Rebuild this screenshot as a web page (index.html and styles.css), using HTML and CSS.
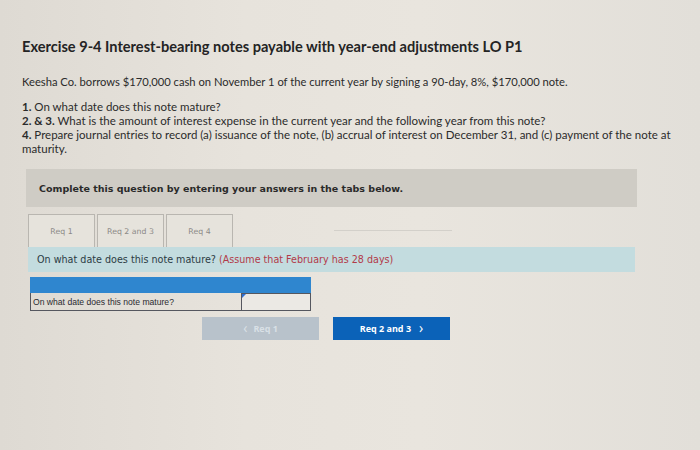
FILE: index.html
```html
<!DOCTYPE html>
<html>
<head>
<meta charset="utf-8">
<link rel="stylesheet" href="styles.css">
</head>
<body>
<div class="page">
  <h1 class="title">Exercise 9-4 Interest-bearing notes payable with year-end adjustments LO P1</h1>
  <p class="intro">Keesha Co. borrows $170,000 cash on November 1 of the current year by signing a 90-day, 8%, $170,000 note.</p>
  <ol class="reqs">
    <li><b>1.</b> On what date does this note mature?</li>
    <li><b>2. &amp; 3.</b> What is the amount of interest expense in the current year and the following year from this note?</li>
    <li><b>4.</b> Prepare journal entries to record (a) issuance of the note, (b) accrual of interest on December 31, and (c) payment of the note at maturity.</li>
  </ol>
  <div class="complete">Complete this question by entering your answers in the tabs below.</div>
  <div class="tabs">
    <div class="tab">Req 1</div>
    <div class="tab">Req 2 and 3</div>
    <div class="tab">Req 4</div>
    <div class="tabline"></div>
  </div>
  <div class="instr">On what date does this note mature? <span class="red">(Assume that February has 28 days)</span></div>
  <div class="answer">
    <div class="ahead"></div>
    <div class="arow">
      <div class="alabel">On what date does this note mature?</div>
      <div class="ainput"><span class="corner"></span></div>
    </div>
  </div>
  <div class="navs">
    <div class="btn prev"><span class="chev">&lsaquo;</span> Req 1</div>
    <div class="btn next">Req 2 and 3 <span class="chev">&rsaquo;</span></div>
  </div>
</div>
</body>
</html>
```
FILE: styles.css
```css
html, body {
  margin: 0;
  padding: 0;
}
body {
  width: 700px;
  height: 450px;
  overflow: hidden;
  background: linear-gradient(90deg, #dedad3 0%, #e7e3dc 35%, #e9e5de 60%, #e2dfd9 100%);
  font-family: Lato, "Open Sans", sans-serif;
  color: #2b2b2b;
}
.page {
  padding: 38px 0 0 22px;
}
.title {
  margin: 0;
  font-size: 14.6px;
  font-weight: 700;
  color: #242424;
  line-height: 18px;
}
.intro {
  margin: 19px 0 0 0;
  font-size: 11.2px;
  line-height: 14px;
}
.reqs {
  list-style: none;
  margin: 11px 0 0 0;
  padding: 0;
  font-size: 11.5px;
  line-height: 14px;
  width: 665px;
}
.reqs b {
  font-weight: 700;
}
.complete {
  margin: 13px 0 0 4px;
  width: 598px;
  height: 38px;
  background: #cfccc5;
  padding-left: 13px;
  display: flex;
  align-items: center;
  font-family: "DejaVu Sans", Verdana, sans-serif;
  font-weight: 700;
  font-size: 9.5px;
  color: #2a2a2a;
}
.tabs {
  display: flex;
  margin: 7px 0 0 6px;
  gap: 2px;
  align-items: stretch;
}
.tab {
  width: 65px;
  height: 32px;
  border: 1px solid #b9b6b0;
  border-bottom: none;
  display: flex;
  align-items: center;
  justify-content: center;
  font-family: "DejaVu Sans", Verdana, sans-serif;
  font-size: 7.8px;
  color: #8c8a87;
  background: #e6e3dc;
}
.tabline {
  align-self: center;
  margin-left: 99px;
  width: 118px;
  height: 1px;
  background: #d3d0ca;
}
.instr {
  margin-left: 6px;
  width: 598px;
  height: 25px;
  background: #c3dcdf;
  padding-left: 9px;
  display: flex;
  align-items: center;
  font-family: "DejaVu Sans", Verdana, sans-serif;
  font-size: 9.6px;
  color: #2c3b44;
}
.red {
  color: #b23a48;
  margin-left: 3px;
}
.answer {
  margin: 5px 0 0 8px;
  width: 281px;
}
.ahead {
  height: 16px;
  background: #2f86cf;
}
.arow {
  display: flex;
  height: 17px;
  border: 1px solid #55575f;
  border-top: none;
}
.alabel {
  flex: 1;
  font-family: "Liberation Sans", Arial, sans-serif;
  font-size: 8.6px;
  color: #2a2a30;
  padding-left: 2px;
  display: flex;
  align-items: center;
}
.ainput {
  width: 68px;
  border-left: 1px solid #55575f;
  border-top: 1px solid #55575f;
  position: relative;
  background: #ebe9e4;
}
.corner {
  position: absolute;
  left: 0;
  top: 0;
  width: 0;
  height: 0;
  border-top: 4px solid #2f6fd0;
  border-right: 4px solid transparent;
}
.navs {
  display: flex;
  margin: 6px 0 0 180px;
  gap: 14px;
}
.btn {
  width: 117px;
  height: 23px;
  display: flex;
  align-items: center;
  justify-content: center;
  font-family: "Open Sans", Lato, sans-serif;
  font-weight: 700;
  font-size: 9px;
}
.prev {
  background: #b8c2cb;
  color: #d9e0e6;
  gap: 6px;
}
.next {
  background: #0b62b8;
  color: #ffffff;
  gap: 8px;
}
.chev {
  font-size: 14px;
  font-weight: 400;
  line-height: 1;
  margin-top: -2px;
}
```
